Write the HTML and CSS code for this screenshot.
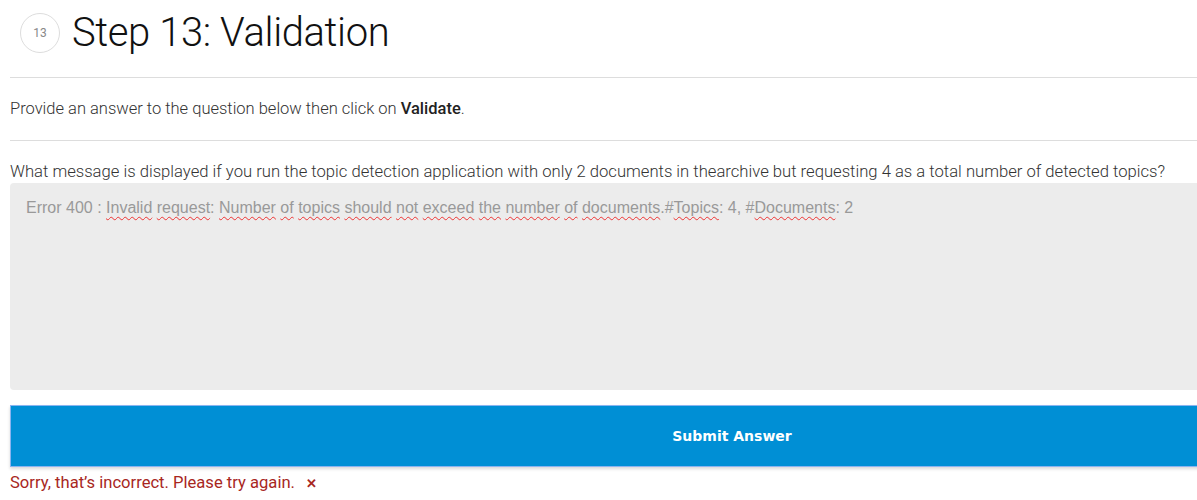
FILE: index.html
```html
<!DOCTYPE html>
<html lang="en">
<head>
    <meta charset="UTF-8">
    <title>Step 13: Validation</title>
    <link rel="stylesheet" href="styles.css">
</head>
<body>
    <div class="page">
        <div class="step-header">
            <span class="step-number">13</span>
            <h1>Step 13: Validation</h1>
        </div>
        <hr>
        <p class="intro">Provide an answer to the question below then click on <strong>Validate</strong>.</p>
        <hr>
        <p class="question">What message is displayed if you run the topic detection application with only 2 documents in thearchive but requesting 4 as a total number of detected topics?</p>
        <div class="answer" contenteditable="true" spellcheck="true">Error 400 : <span class="typo">Invalid</span> <span class="typo">request</span>: <span class="typo">Number</span> <span class="typo">of</span> <span class="typo">topics</span> <span class="typo">should</span> <span class="typo">not</span> <span class="typo">exceed</span> <span class="typo">the</span> <span class="typo">number</span> <span class="typo">of</span> <span class="typo">documents</span>.#<span class="typo">Topics</span>: 4, #<span class="typo">Documents</span>: 2</div>
        <button class="submit">Submit Answer</button>
        <p class="feedback">Sorry, that’s incorrect. Please try again. <span class="close">&#10005;</span></p>
    </div>
</body>
</html>
```

FILE: styles.css
```css
body {
    margin: 0;
    overflow: hidden;
    font-family: Roboto, "Liberation Sans", sans-serif;
    color: #333;
    background: #fff;
}
.page {
    width: 1444px;
    padding: 0 10px;
}
.step-header {
    display: flex;
    align-items: center;
    gap: 12px;
    height: 65px;
    padding-left: 10px;
    margin-bottom: 12px;
}
.step-number {
    width: 38px;
    height: 38px;
    border: 1px solid #ddd;
    border-radius: 50%;
    display: flex;
    align-items: center;
    justify-content: center;
    font-size: 12px;
    color: #888;
}
h1 {
    margin: 0;
    font-size: 40px;
    font-weight: 300;
    color: #111;
    letter-spacing: -0.4px;
}
hr {
    border: none;
    border-top: 1px solid #ddd;
    margin: 0;
}
.intro {
    margin: 0;
    padding: 21px 0 22px;
    font-size: 16.5px;
    line-height: 19px;
    font-weight: 300;
}
.intro strong {
    font-weight: 500;
    color: #222;
}
.question {
    margin: 0;
    padding: 21px 0 2px;
    font-size: 16.65px;
    line-height: 19px;
    font-weight: 300;
}
.answer {
    height: 207px;
    box-sizing: border-box;
    background: #ececec;
    border-radius: 4px;
    padding: 16px;
    font-family: "Liberation Sans", Arial, sans-serif;
    font-size: 16px;
    color: #999;
    outline: none;
}
.typo {
    text-decoration: underline wavy #e33;
    text-decoration-thickness: 1px;
    text-underline-offset: 3px;
}
.submit {
    display: block;
    width: 100%;
    margin-top: 15px;
    height: 62px;
    background: #008fd5;
    border: 1px solid #8ab4f0;
    box-shadow: 0 2px 3px rgba(0,0,0,0.15);
    color: #fff;
    font-family: "DejaVu Sans", sans-serif;
    font-weight: bold;
    font-size: 14px;
    cursor: pointer;
}
.feedback {
    margin: 6px 0 0;
    font-size: 16.6px;
    line-height: 20px;
    color: #a8271e;
}
.close {
    margin-left: 7px;
    font-size: 13px;
    font-weight: bold;
}
```
